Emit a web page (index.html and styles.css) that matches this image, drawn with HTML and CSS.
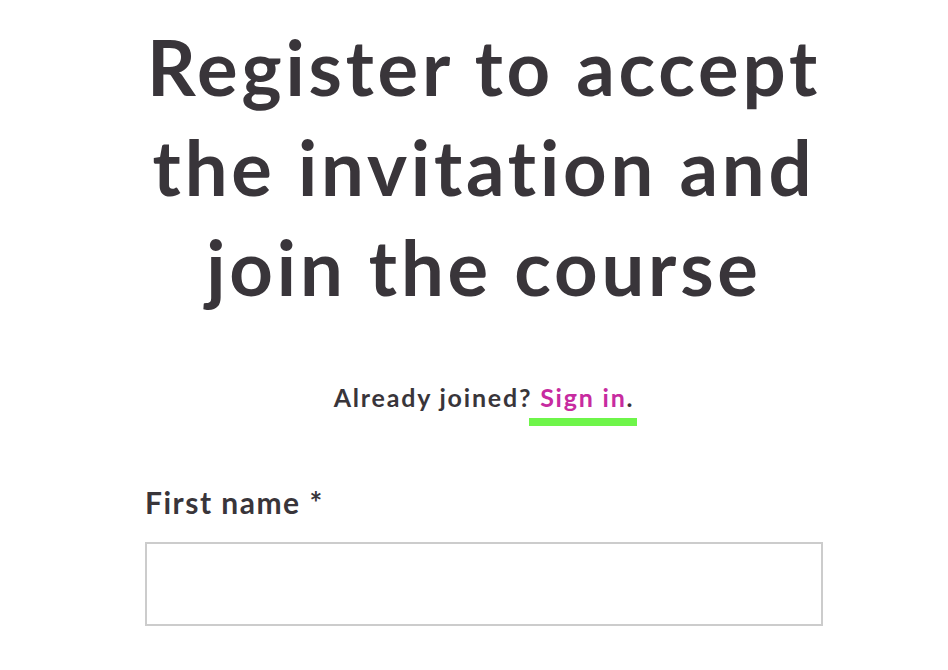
FILE: index.html
```html
<!DOCTYPE html>
<html lang="en">
<head>
<meta charset="utf-8">
<title>Register</title>
<link rel="stylesheet" href="styles.css">
</head>
<body>
<main class="page">
  <h1 class="title">Register to accept the invitation and join the course</h1>
  <p class="already">Already joined? <a class="signin" href="#">Sign in</a>.</p>
  <form class="form">
    <label class="label" for="first">First name *</label>
    <input class="input" id="first" type="text">
  </form>
</main>
</body>
</html>
```
FILE: styles.css
```css
html, body {
  margin: 0;
  padding: 0;
  background: #ffffff;
}
body {
  font-family: Lato, "Noto Sans", sans-serif;
  color: #39353a;
}
.page {
  width: 678px;
  margin-left: 145px;
  padding-top: 17px;
}
.title {
  margin: 0;
  text-align: center;
  font-size: 76px;
  line-height: 100px;
  font-weight: 700;
  letter-spacing: 3.8px;
}
.already {
  margin: 64px 0 0;
  text-align: center;
  font-size: 25px;
  font-weight: 700;
  line-height: 32px;
  letter-spacing: 1.8px;
}
.signin {
  position: relative;
  color: #c72ba0;
  text-decoration: none;
}
.signin::after {
  content: "";
  position: absolute;
  left: -11px;
  right: -10px;
  bottom: -14px;
  height: 8px;
  background: #6ef54a;
}
.form {
  margin-top: 71px;
  display: flex;
  flex-direction: column;
}
.label {
  font-size: 30px;
  font-weight: 700;
  line-height: 36px;
  letter-spacing: 1.5px;
}
.input {
  margin-top: 22px;
  height: 84px;
  box-sizing: border-box;
  border: 2px solid #cccccc;
  border-radius: 0;
  padding: 0 16px;
  font: inherit;
}
```
